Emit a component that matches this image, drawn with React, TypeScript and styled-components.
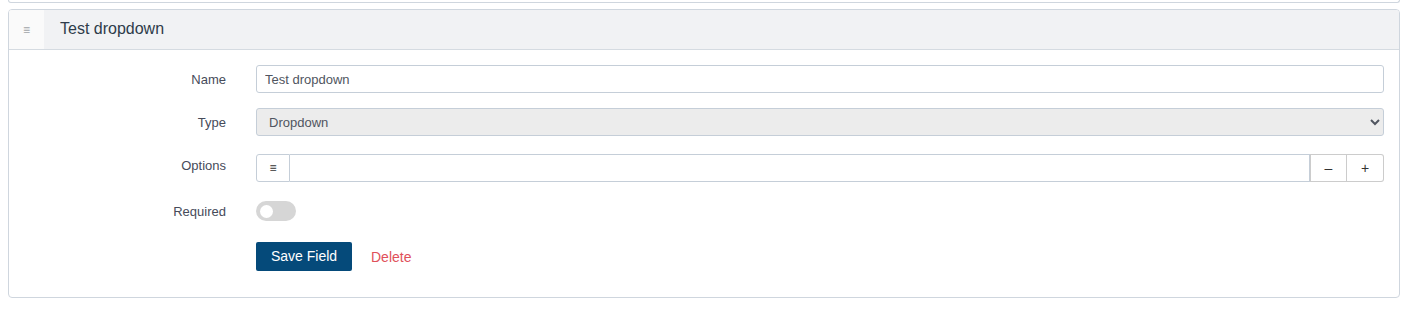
import React from "react";
import styled, { createGlobalStyle } from "styled-components";

const GlobalStyle = createGlobalStyle`
  body {
    margin: 0;
    background: #ffffff;
    font-family: "Liberation Sans", Arial, sans-serif;
    color: #333;
  }
  * {
    box-sizing: border-box;
  }
`;

const App = () => {
  const [name, setName] = React.useState("Test dropdown");
  const [type, setType] = React.useState("dropdown");
  const [option, setOption] = React.useState("");
  const [required, setRequired] = React.useState(false);

  return (
    <Page>
      <GlobalStyle />
      <PrevCard />
      <Card>
        <Header>
          <Handle>≡</Handle>
          <Title>{name}</Title>
        </Header>
        <Body>
          <Row $mb={15}>
            <Label>Name</Label>
            <TextInput value={name} onChange={(e) => setName(e.target.value)} />
          </Row>
          <Row $mb={18}>
            <Label>Type</Label>
            <Select value={type} onChange={(e) => setType(e.target.value)}>
              <option value="text">Text</option>
              <option value="dropdown">Dropdown</option>
              <option value="checkbox">Checkbox</option>
            </Select>
          </Row>
          <Row $mb={15}>
            <Label $top>Options</Label>
            <Group>
              <GroupHandle>≡</GroupHandle>
              <GroupInput value={option} onChange={(e) => setOption(e.target.value)} />
              <GroupButton>–</GroupButton>
              <GroupButton $last>+</GroupButton>
            </Group>
          </Row>
          <Row $mb={17}>
            <Label>Required</Label>
            <Toggle $on={required} onClick={() => setRequired(!required)}>
              <Knob $on={required} />
            </Toggle>
          </Row>
          <Row $mb={0}>
            <span />
            <Actions>
              <SaveButton>Save Field</SaveButton>
              <DeleteLink>Delete</DeleteLink>
            </Actions>
          </Row>
        </Body>
      </Card>
    </Page>
  );
};

export default App;

const Page = styled.div`
  padding: 0 8px;
`;

const PrevCard = styled.div`
  height: 3px;
  border: 1px solid #cfd6de;
  border-top: none;
  border-radius: 0 0 4px 4px;
  margin-bottom: 6px;
`;

const Card = styled.div`
  border: 1px solid #cfd6de;
  border-radius: 4px;
  overflow: hidden;
`;

const Header = styled.div`
  display: flex;
  align-items: stretch;
  height: 40px;
  background: #f1f2f4;
  border-bottom: 1px solid #d5dbe1;
`;

const Handle = styled.div`
  width: 35px;
  display: flex;
  align-items: center;
  justify-content: center;
  background: #fafafa;
  color: #a0a4a8;
  font-size: 12px;
`;

const Title = styled.div`
  display: flex;
  align-items: center;
  padding-left: 16px;
  padding-bottom: 2px;
  font-size: 16px;
  color: #2e3c4a;
`;

const Body = styled.div`
  padding: 15px 15px 26px 0;
`;

const Row = styled.div<{ $mb: number }>`
  display: grid;
  grid-template-columns: 217px 1fr;
  column-gap: 30px;
  align-items: center;
  min-height: 28px;
  margin-bottom: ${(p) => p.$mb}px;
`;

const Label = styled.label<{ $top?: boolean }>`
  text-align: right;
  font-size: 13px;
  color: #464b5a;
  align-self: ${(p) => (p.$top ? "start" : "center")};
  padding-top: ${(p) => (p.$top ? "4px" : "0")};
`;

const TextInput = styled.input`
  height: 28px;
  width: 100%;
  border: 1px solid #c5ced8;
  border-radius: 3px;
  padding: 0 8px;
  font-family: inherit;
  font-size: 13px;
  color: #505560;
  outline: none;
`;

const Select = styled.select`
  height: 28px;
  width: 100%;
  border: 1px solid #c5ced8;
  border-radius: 3px;
  padding: 0 8px;
  background: #ececec;
  font-family: inherit;
  font-size: 13px;
  color: #505560;
  outline: none;
`;

const Group = styled.div`
  display: flex;
  height: 28px;
`;

const GroupHandle = styled.button`
  width: 34px;
  border: 1px solid #c5ced8;
  border-radius: 3px 0 0 3px;
  background: #ffffff;
  color: #333;
  font-size: 12px;
  padding: 0;
`;

const GroupInput = styled.input`
  flex: 1;
  border: 1px solid #c5ced8;
  border-left: none;
  outline: none;
  font-family: inherit;
  font-size: 13px;
  padding: 0 8px;
`;

const GroupButton = styled.button<{ $last?: boolean }>`
  width: 37px;
  border: 1px solid #cccccc;
  border-left: ${(p) => (p.$last ? "none" : "1px solid #cccccc")};
  border-radius: ${(p) => (p.$last ? "0 3px 3px 0" : "0")};
  background: #ffffff;
  color: #333;
  font-family: inherit;
  font-size: 14px;
  padding: 0;
`;

const Toggle = styled.div<{ $on: boolean }>`
  width: 40px;
  height: 20px;
  border-radius: 10px;
  background: ${(p) => (p.$on ? "#054a7a" : "#d6d6d6")};
  display: flex;
  align-items: center;
  justify-content: ${(p) => (p.$on ? "flex-end" : "flex-start")};
  padding: 0 4px;
  cursor: pointer;
`;

const Knob = styled.span<{ $on: boolean }>`
  width: 13px;
  height: 13px;
  border-radius: 50%;
  background: #ffffff;
`;

const Actions = styled.div`
  display: flex;
  align-items: center;
`;

const SaveButton = styled.button`
  height: 29px;
  width: 96px;
  border: none;
  border-radius: 2px;
  background: #054a7a;
  color: #ffffff;
  font-family: inherit;
  font-size: 14px;
  padding: 0 0 2px;
  cursor: pointer;
`;

const DeleteLink = styled.a`
  margin-left: 19px;
  font-size: 14px;
  color: #e0505a;
  cursor: pointer;
`;
